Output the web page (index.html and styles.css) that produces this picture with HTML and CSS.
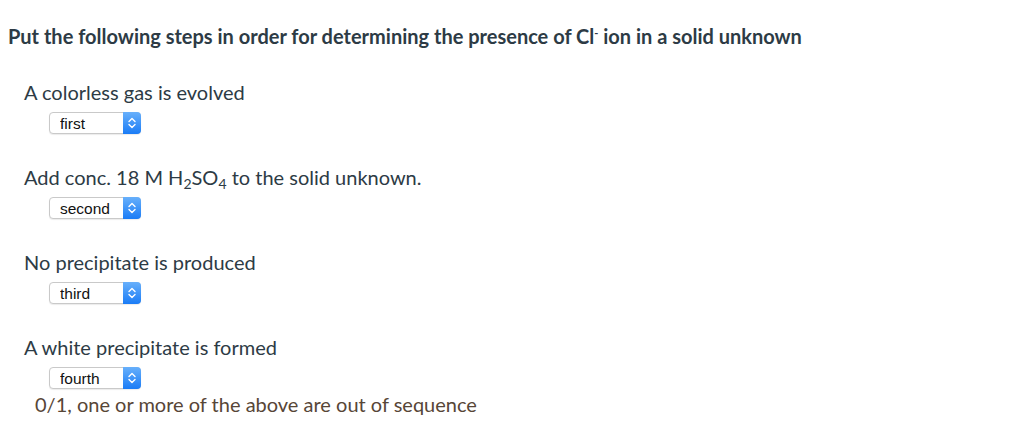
FILE: index.html
```html
<!DOCTYPE html>
<html lang="en">
<head>
    <meta charset="UTF-8">
    <title>Ordering question</title>
    <link rel="stylesheet" href="styles.css">
</head>
<body>
    <div class="question">
        <h1 class="prompt">Put the following steps in order for determining the presence of Cl<sup>-</sup> ion in a solid unknown</h1>

        <div class="steps">
            <div class="step">
                <p class="step-text">A colorless gas is evolved</p>
                <span class="picker">
                    <select>
                        <option selected>first</option>
                        <option>second</option>
                        <option>third</option>
                        <option>fourth</option>
                    </select>
                    <span class="arrow"><svg width="8" height="12" viewBox="0 0 8 12"><path d="M1 4.5 L4 1.5 L7 4.5 M1 7.5 L4 10.5 L7 7.5" fill="none" stroke="#fff" stroke-width="1.4" stroke-linecap="round" stroke-linejoin="round"/></svg></span>
                </span>
            </div>

            <div class="step">
                <p class="step-text">Add conc. 18 M H<sub>2</sub>SO<sub>4</sub> to the solid unknown.</p>
                <span class="picker">
                    <select>
                        <option>first</option>
                        <option selected>second</option>
                        <option>third</option>
                        <option>fourth</option>
                    </select>
                    <span class="arrow"><svg width="8" height="12" viewBox="0 0 8 12"><path d="M1 4.5 L4 1.5 L7 4.5 M1 7.5 L4 10.5 L7 7.5" fill="none" stroke="#fff" stroke-width="1.4" stroke-linecap="round" stroke-linejoin="round"/></svg></span>
                </span>
            </div>

            <div class="step">
                <p class="step-text">No precipitate is produced</p>
                <span class="picker">
                    <select>
                        <option>first</option>
                        <option>second</option>
                        <option selected>third</option>
                        <option>fourth</option>
                    </select>
                    <span class="arrow"><svg width="8" height="12" viewBox="0 0 8 12"><path d="M1 4.5 L4 1.5 L7 4.5 M1 7.5 L4 10.5 L7 7.5" fill="none" stroke="#fff" stroke-width="1.4" stroke-linecap="round" stroke-linejoin="round"/></svg></span>
                </span>
            </div>

            <div class="step">
                <p class="step-text">A white precipitate is formed</p>
                <span class="picker">
                    <select>
                        <option>first</option>
                        <option>second</option>
                        <option>third</option>
                        <option selected>fourth</option>
                    </select>
                    <span class="arrow"><svg width="8" height="12" viewBox="0 0 8 12"><path d="M1 4.5 L4 1.5 L7 4.5 M1 7.5 L4 10.5 L7 7.5" fill="none" stroke="#fff" stroke-width="1.4" stroke-linecap="round" stroke-linejoin="round"/></svg></span>
                </span>
            </div>
        </div>

        <p class="result">0/1, one or more of the above are out of sequence</p>
    </div>
</body>
</html>
```

FILE: styles.css
```css
:root {
    --text-color: #2d3b45;
    --result-color: #574637;
}

* {
    margin: 0;
    padding: 0;
    box-sizing: border-box;
}

body {
    font-family: Lato, 'Open Sans', sans-serif;
    background: #fff;
    color: var(--text-color);
}

.question {
    padding: 24px 8px 0;
}

.prompt {
    font-size: 20px;
    font-weight: bold;
    line-height: 24px;
}

.prompt sup {
    font-size: 11px;
    vertical-align: 7px;
    line-height: 0;
}

.steps {
    display: flex;
    flex-direction: column;
    gap: 31px;
    padding: 32px 0 0 16px;
}

.step {
    display: flex;
    flex-direction: column;
    align-items: flex-start;
}

.step-text {
    font-size: 20px;
    line-height: 24px;
}

.step-text sub {
    font-size: 14px;
    vertical-align: -4px;
    line-height: 0;
}

.picker {
    position: relative;
    display: inline-block;
    margin: 8px 0 0 25px;
    width: 92px;
    height: 22px;
}

.picker select {
    appearance: none;
    -webkit-appearance: none;
    width: 100%;
    height: 100%;
    border: 1px solid #c9c9c9;
    border-radius: 4px;
    background: #fff;
    padding: 0 0 0 10px;
    font-family: 'Liberation Sans', Arial, sans-serif;
    font-size: 15.5px;
    color: #111;
    box-shadow: 0 1px 1px rgba(0, 0, 0, 0.08);
}

.arrow {
    position: absolute;
    top: 0;
    right: 0;
    width: 18px;
    height: 22px;
    border-radius: 0 4px 4px 0;
    background: linear-gradient(#68b0fb, #1a7cf6);
    display: flex;
    align-items: center;
    justify-content: center;
    pointer-events: none;
}

.result {
    font-size: 20px;
    line-height: 24px;
    color: var(--result-color);
    padding: 3px 0 0 27px;
}
```
